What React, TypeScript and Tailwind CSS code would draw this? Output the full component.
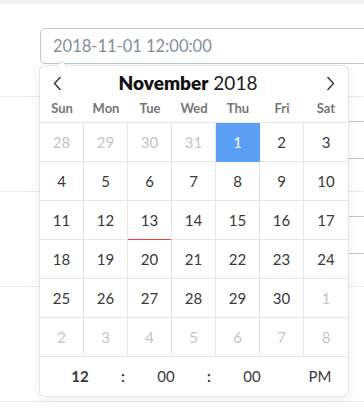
import React from "react";

const weekdays = ["Sun", "Mon", "Tue", "Wed", "Thu", "Fri", "Sat"];

type Day = { n: number; muted?: boolean; selected?: boolean; today?: boolean };

const days: Day[] = [
  ...[28, 29, 30, 31].map((n) => ({ n, muted: true })),
  ...Array.from({ length: 30 }, (_, i) => ({
    n: i + 1,
    selected: i === 0,
    today: i === 12,
  })),
  ...[1, 2, 3, 4, 5, 6, 7, 8].map((n) => ({ n, muted: true })),
];

function DayCell({ d, idx }: { d: Day; idx: number }) {
  const lastCol = idx % 7 === 6;
  let cls = "relative h-[39px] flex items-center justify-center text-[15px] border-b ";
  if (!lastCol) cls += "border-r ";
  if (d.selected) cls += "bg-[#5a9ef5] border-[#5a9ef5] text-white ";
  else if (d.muted) cls += "border-[#e6e6e6] text-[#c4c4c4] ";
  else cls += "border-[#e6e6e6] text-[#393939] ";
  return (
    <div className={cls}>
      {d.n}
      {d.today && (
        <span className="absolute left-0 right-0 bottom-[-1px] h-px bg-[#ff3b3b]" />
      )}
    </div>
  );
}

function Calendar() {
  return (
    <div className="absolute left-[40px] top-[66px] w-[308px] bg-white rounded-[5px] shadow-[0_0_0_1px_#e6e6e6,0_3px_13px_rgba(0,0,0,0.08)]">
      <svg
        className="absolute left-[16px] top-[-5px]"
        width="12"
        height="6"
        viewBox="0 0 12 6"
      >
        <path d="M0 6 L6 0.5 L12 6 Z" fill="#fff" />
        <path d="M0 6 L6 0.5 L12 6" fill="none" stroke="#d6dde6" strokeWidth="1" />
      </svg>
      <div className="h-[30px] flex items-center justify-between px-[13px] pt-[4px]">
        <svg width="9" height="15" viewBox="0 0 9 15">
          <path d="M7.5 1 L1.5 7.5 L7.5 14" fill="none" stroke="#222" strokeWidth="1.2" />
        </svg>
        <div className="text-[19px] text-[#111] mr-[12px]">
          <span className="font-extrabold">November</span>{" "}
          <span className="font-normal text-[#222]">2018</span>
        </div>
        <svg width="9" height="15" viewBox="0 0 9 15">
          <path d="M1.5 1 L7.5 7.5 L1.5 14" fill="none" stroke="#222" strokeWidth="1.2" />
        </svg>
      </div>
      <div className="h-[26px] grid grid-cols-7 items-center">
        {weekdays.map((w) => (
          <div key={w} className="text-center text-[13px] font-bold text-[#757575]">
            {w}
          </div>
        ))}
      </div>
      <div className="grid grid-cols-[repeat(7,44px)] border-t border-[#e6e6e6]">
        {days.map((d, i) => (
          <DayCell key={i} d={d} idx={i} />
        ))}
      </div>
      <div className="h-[39px] flex items-center text-[15px] text-[#393939]">
        <div className="w-[80px] text-center font-bold">12</div>
        <div className="w-[6px] text-center font-bold">:</div>
        <div className="w-[80px] text-center">00</div>
        <div className="w-[6px] text-center font-bold">:</div>
        <div className="w-[80px] text-center">00</div>
        <div className="flex-1 text-center">PM</div>
      </div>
    </div>
  );
}

export default function App() {
  return (
    <div className="relative w-full min-h-[414px] overflow-hidden bg-white font-['Lato','Open_Sans',sans-serif]">
      <div className="h-[4px] bg-[#eef0f3]" />
      <div className="h-[93px] border-b border-[#ebebeb] pt-[24px] pl-[40px]">
        <div className="w-[360px] h-[36px] border border-[#b9c7d6] rounded-[5px] flex items-center pl-[12px] text-[16.5px] text-[#858e9b]">
          2018-11-01 12:00:00
        </div>
      </div>
      <div className="h-[95px] border-b border-[#ebebeb] pt-[24px] pl-[40px]">
        <div className="w-[360px] h-[38px] border border-[#b9c7d6] rounded-[5px]" />
      </div>
      <div className="h-[95px] border-b border-[#ebebeb] pt-[24px] pl-[40px]">
        <div className="w-[360px] h-[38px] border border-[#b9c7d6] rounded-[5px]" />
      </div>
      <div className="h-[115px] border-b border-[#ebebeb]" />
      <Calendar />
    </div>
  );
}
